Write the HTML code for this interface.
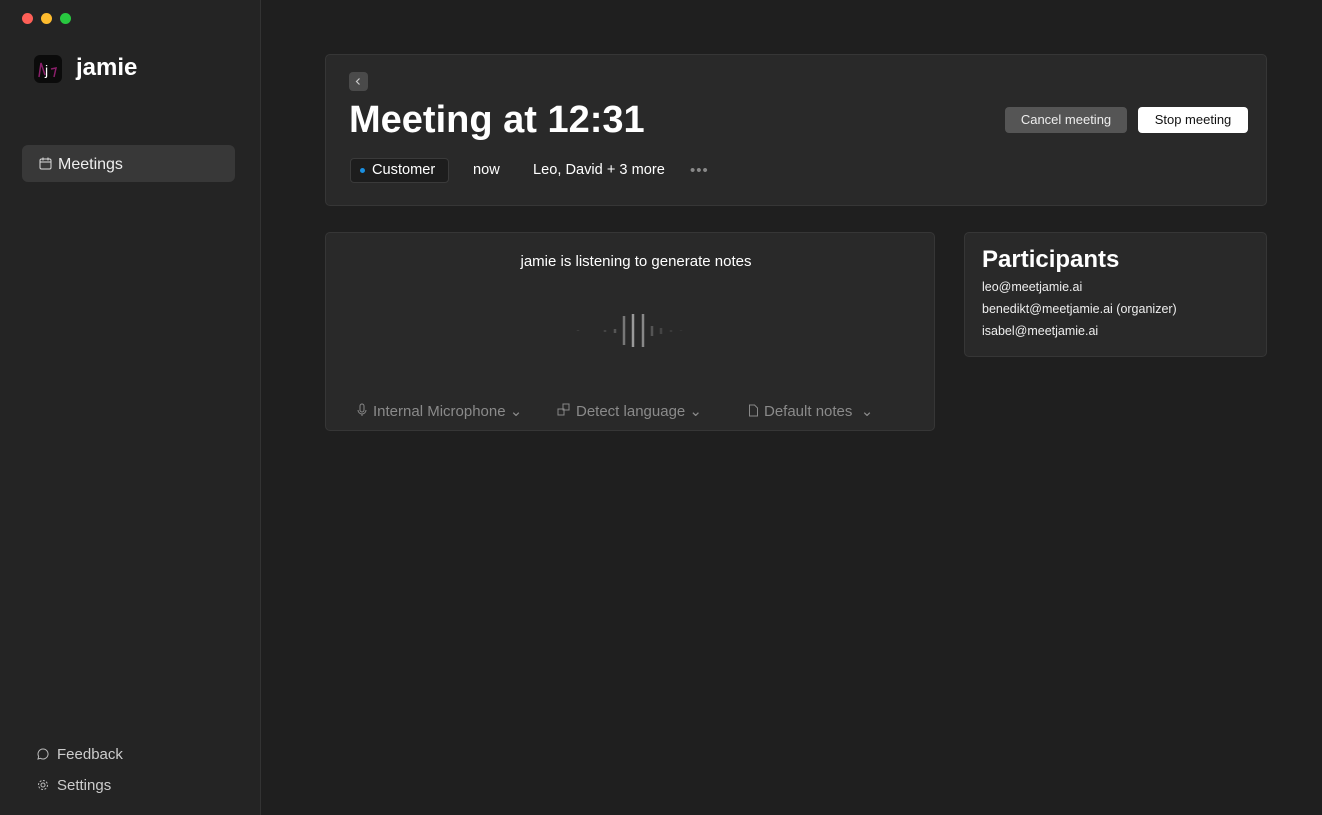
<!DOCTYPE html>
<html><head><meta charset="utf-8"><style>
*{box-sizing:border-box;margin:0;padding:0}
body{width:1322px;height:815px;background:#1f1f1f;font-family:"Liberation Sans",sans-serif;color:#fff;position:relative;overflow:hidden}
.abs{position:absolute}
.side{left:0;top:0;width:261px;height:815px;background:#242424;border-right:1px solid #333}
.dot{width:11px;height:11px;border-radius:50%;top:13px}
.card{background:#292929;border:1px solid #363636;border-radius:5px}
.t{white-space:nowrap}
</style></head><body>
<div class="abs side">
 <div class="abs dot" style="left:22px;background:#fe5f57"></div>
 <div class="abs dot" style="left:41px;background:#febc2e"></div>
 <div class="abs dot" style="left:60px;background:#28c840"></div>
 <div class="abs" style="left:34px;top:55px;width:28px;height:28px;background:#0b0b0b;border-radius:6px;overflow:hidden">
  <svg width="28" height="28"><path d="M5 22 L7 8 L11 20 M17 14 L22 13 L20 22" stroke="#8a1f6a" stroke-width="1.5" fill="none"/><text x="11" y="20" font-size="14" fill="#fff" font-family="Liberation Sans">j</text></svg>
 </div>
 <div class="abs t" style="left:76px;top:54px;font-size:24px;font-weight:bold">jamie</div>
 <div class="abs" style="left:22px;top:145px;width:213px;height:37px;background:#383838;border-radius:6px"></div>
 <svg class="abs" style="left:39px;top:157px" width="13" height="13" viewBox="0 0 13 13"><rect x="1" y="2" width="11" height="10" rx="1.5" stroke="#ddd" fill="none"/><path d="M1 5h11M4 0.5v3M9 0.5v3" stroke="#ddd"/></svg>
 <div class="abs t" style="left:58px;top:156px;font-size:16px;color:#eee">Meetings</div>
 <svg class="abs" style="left:37px;top:748px" width="12" height="12" viewBox="0 0 12 12"><path d="M6 1a5 5 0 1 1-2.5 9.3L1 11l.7-2.5A5 5 0 0 1 6 1z" stroke="#bbb" fill="none"/></svg>
 <div class="abs t" style="left:57px;top:746px;font-size:15px;color:#ccc">Feedback</div>
 <svg class="abs" style="left:37px;top:779px" width="12" height="12" viewBox="0 0 12 12"><circle cx="6" cy="6" r="2" stroke="#bbb" fill="none"/><circle cx="6" cy="6" r="4.5" stroke="#bbb" stroke-dasharray="2 1.5" fill="none"/></svg>
 <div class="abs t" style="left:57px;top:777px;font-size:15px;color:#ccc">Settings</div>
</div>

<div class="abs card" style="left:325px;top:54px;width:942px;height:152px"></div>
<div class="abs" style="left:349px;top:72px;width:19px;height:19px;background:#4a4a4a;border-radius:4px"></div>
<svg class="abs" style="left:349px;top:72px" width="19" height="19"><path d="M10.5 6.5 L7.5 9.5 L10.5 12.5" stroke="#ccc" fill="none" stroke-width="1.2"/></svg>
<div class="abs t" style="left:349px;top:99px;font-size:38px;font-weight:bold">Meeting at 12:31</div>
<div class="abs" style="left:350px;top:158px;width:99px;height:25px;background:#1d1d1d;border:1px solid #3a3a3a;border-radius:4px"></div>
<div class="abs" style="left:360px;top:168px;width:5px;height:5px;border-radius:50%;background:#1a8fe0"></div>
<div class="abs t" style="left:372px;top:162px;font-size:14.6px">Customer</div>
<div class="abs t" style="left:473px;top:162px;font-size:14.6px">now</div>
<div class="abs t" style="left:533px;top:162px;font-size:14.6px">Leo, David + 3 more</div>
<div class="abs t" style="left:690px;top:162px;font-size:15px;color:#888;letter-spacing:1px">•••</div>
<div class="abs" style="left:1005px;top:107px;width:122px;height:26px;background:#555;border-radius:4px;font-size:13px;text-align:center;line-height:26px;color:#eee">Cancel meeting</div>
<div class="abs" style="left:1138px;top:107px;width:110px;height:26px;background:#fff;border-radius:4px;font-size:13px;text-align:center;line-height:26px;color:#111">Stop meeting</div>

<div class="abs card" style="left:325px;top:232px;width:610px;height:199px"></div>
<div class="abs t" style="left:331px;width:610px;text-align:center;top:253px;font-size:15px">jamie is listening to generate notes</div>
<svg class="abs" style="left:570px;top:310px" width="120" height="42">
 <g stroke-width="2.5" stroke-linecap="butt">
 <line x1="8" y1="20" x2="8" y2="21" stroke="#3a3a3a"/>
 <line x1="35" y1="20" x2="35" y2="22" stroke="#444"/>
 <line x1="45" y1="19" x2="45" y2="23" stroke="#555"/>
 <line x1="54" y1="6" x2="54" y2="35" stroke="#777"/>
 <line x1="63" y1="4" x2="63" y2="37" stroke="#999"/>
 <line x1="73" y1="4" x2="73" y2="37" stroke="#888"/>
 <line x1="82" y1="16" x2="82" y2="26" stroke="#555"/>
 <line x1="91" y1="18" x2="91" y2="24" stroke="#444"/>
 <line x1="101" y1="20" x2="101" y2="22" stroke="#3a3a3a"/>
 <line x1="111" y1="20" x2="111" y2="21" stroke="#333"/>
 </g></svg>
<svg class="abs" style="left:357px;top:403px" width="10" height="14"><rect x="3" y="1" width="4" height="8" rx="2" stroke="#888" fill="none"/><path d="M1 7a4 4 0 0 0 8 0M5 11v2" stroke="#888" fill="none"/></svg>
<div class="abs t" style="left:373px;top:402px;font-size:15px;color:#8a8a8a">Internal Microphone ⌄</div>
<svg class="abs" style="left:557px;top:403px" width="14" height="14"><rect x="1" y="6" width="6" height="6" stroke="#888" fill="none"/><rect x="6" y="1" width="6" height="6" stroke="#888" fill="none"/></svg>
<div class="abs t" style="left:576px;top:402px;font-size:15px;color:#8a8a8a">Detect language ⌄</div>
<svg class="abs" style="left:748px;top:404px" width="12" height="13"><path d="M1.5 1h5l3 3v8h-8z" stroke="#888" fill="none"/></svg>
<div class="abs t" style="left:764px;top:402px;font-size:15px;color:#8a8a8a">Default notes &nbsp;⌄</div>

<div class="abs card" style="left:964px;top:232px;width:303px;height:125px"></div>
<div class="abs t" style="left:982px;top:246px;font-size:24px;font-weight:bold">Participants</div>
<div class="abs t" style="left:982px;top:280px;font-size:12.5px;color:#eee">leo@meetjamie.ai</div>
<div class="abs t" style="left:982px;top:302px;font-size:12.5px;color:#eee">benedikt@meetjamie.ai (organizer)</div>
<div class="abs t" style="left:982px;top:324px;font-size:12.5px;color:#eee">isabel@meetjamie.ai</div>
</body></html>
